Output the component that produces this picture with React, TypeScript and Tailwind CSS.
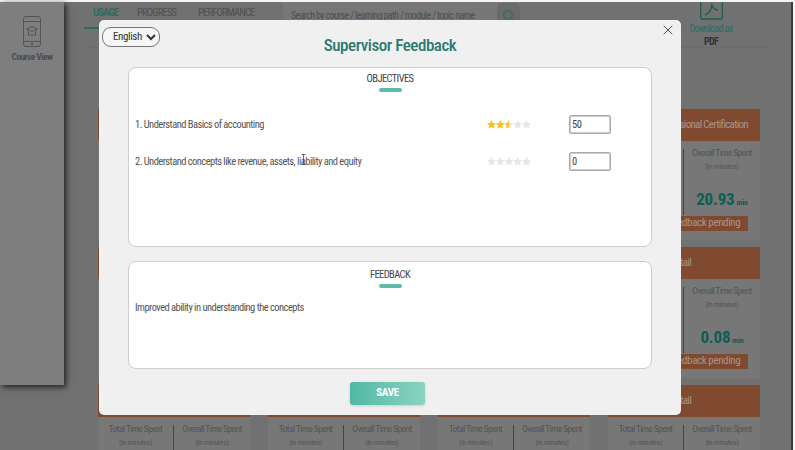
import { Search, X } from "lucide-react";

const font = "font-['Roboto',sans-serif] [font-stretch:75%]";

const cards = [
  { title: "Course Overview", value: "", pending: false, titleClass: "justify-center" },
  { title: "Course Overview", value: "", pending: false, titleClass: "justify-center" },
  { title: "Course Overview", value: "", pending: false, titleClass: "justify-center" },
  { title: "Professional Certification", value: "20.93", pending: true, titleClass: "justify-end pr-3" },
  { title: "Course Detail", value: "", pending: false, titleClass: "justify-center" },
  { title: "Course Detail", value: "", pending: false, titleClass: "justify-center" },
  { title: "Course Detail", value: "", pending: false, titleClass: "justify-center" },
  { title: "Retail", value: "0.08", pending: true, titleClass: "justify-end pr-[69px]" },
  { title: "Course Detail", value: "", pending: false, titleClass: "justify-center" },
  { title: "Course Detail", value: "", pending: false, titleClass: "justify-center" },
  { title: "Course Detail", value: "", pending: false, titleClass: "justify-center" },
  { title: "Retail", value: "", pending: false, titleClass: "justify-end pr-[69px]" },
];

const objectives = [
  { label: "1. Understand Basics of accounting", score: 50 },
  { label: "2. Understand concepts like revenue, assets, liability and equity", score: 0 },
];

function Stars({ className }: { className: string }) {
  return (
    <svg viewBox="0 0 44 9" width={44} height={9} className={`shrink-0 ${className}`}>
      {[0, 8.75, 17.5, 26.25, 35].map((x) => (
        <path
          key={x}
          transform={`translate(${x} 0)`}
          d="M4.5 0 5.9 2.9 9 3.3 6.7 5.4 7.3 8.6 4.5 7 1.7 8.6 2.3 5.4 0 3.3 3.1 2.9Z"
          fill="currentColor"
        />
      ))}
    </svg>
  );
}

function Rating({ score }: { score: number }) {
  return (
    <div className="relative h-[9px] w-11">
      <Stars className="text-[#e6e6e6]" />
      <div className="absolute left-0 top-0 h-[9px] overflow-hidden" style={{ width: `${score}%` }}>
        <Stars className="text-[#fcc419]" />
      </div>
    </div>
  );
}

function SectionTitle({ children }: { children: string }) {
  return (
    <div className="flex flex-col items-center">
      <div className="text-[10.5px] leading-[13px] tracking-[-0.6px] text-[#444]">{children}</div>
      <div className="mt-[3px] h-1 w-[23px] rounded-full bg-[#5cbcaa]" />
    </div>
  );
}

function TimeLabel({ children }: { children: string }) {
  return (
    <>
      <div className="whitespace-nowrap text-[9.5px] leading-[8px] tracking-[-0.6px]">{children}</div>
      <div className="mt-[6px] whitespace-nowrap text-[7.5px] leading-[8px] tracking-[-0.2px]">(in minutes)</div>
    </>
  );
}

function Card({ card }: { card: (typeof cards)[number] }) {
  return (
    <div className="flex h-[131px] flex-col bg-[#777]">
      <div className={`flex h-[32px] shrink-0 items-center bg-[#7f4a30] text-[11px] tracking-[-0.7px] text-[#ab9488] ${card.titleClass}`}>
        {card.title}
      </div>
      <div className="mt-2 grid h-[63px] shrink-0 grid-cols-2 text-center text-[#555]">
        <div className="border-r border-[#444]">
          <TimeLabel>Total Time Spent</TimeLabel>
        </div>
        <div>
          <TimeLabel>Overall Time Spent</TimeLabel>
          {card.value && (
            <div className="mt-[16px] whitespace-nowrap font-bold leading-[24px] text-[#0b5f52]">
              <span className="text-[17px] tracking-[-0.2px]">{card.value}</span>
              <span className="ml-[2px] text-[8px] tracking-[-0.2px]">min</span>
            </div>
          )}
        </div>
      </div>
      {card.pending && (
        <div className="mr-3 ml-auto mt-[4px] flex h-[15px] w-[88px] shrink-0 items-center justify-center whitespace-nowrap bg-[#7f4a30] text-[11px] tracking-[-0.4px] text-[#ab9488]">
          Feedback pending
        </div>
      )}
    </div>
  );
}

export default function App() {
  return (
    <div className={`relative flex h-[450px] w-[795px] flex-col overflow-hidden bg-[#f4f4f4] ${font}`}>
      <div className="mt-[2px] mr-[2px] flex min-h-0 flex-1 border-r-[2px] border-[#3a3a3a] bg-[#717171]">
        <aside className="flex h-[383px] w-16 shrink-0 flex-col items-center bg-[#7e7e7e] pt-[14px] shadow-[2px_2px_6px_rgba(0,0,0,0.75)]">
          <svg viewBox="0 0 18 31" width={18} height={31} fill="none" stroke="#555" strokeWidth="1">
            <rect x="0.5" y="0.5" width="17" height="30" rx="2.5" />
            <path d="M0.5 5.5h17M0.5 25.5h17" />
            <circle cx="9" cy="28" r="0.8" fill="#555" />
            <path d="M3.5 13 9 10.5 14.5 13 9 15.5Z" />
            <path d="M5.5 14.5v4.5h7v-4.5" />
          </svg>
          <div className="mt-[3px] text-[9.5px] font-bold tracking-[-0.6px] text-[#4e4e4e]">Course View</div>
        </aside>

        <main className="min-w-0 flex-1 pl-5">
          <header className="mr-[23px] flex h-[46px] border-b border-[#6c6c6c]">
            <nav className="flex h-[27px] text-[10.5px] leading-[22px] tracking-[-0.8px] text-[#505050]">
              <div className="w-[53px] border-b-2 border-[#2f6b5e] pl-[9px] font-bold text-[#2f6b5e]">USAGE</div>
              <div className="w-[61px]">PROGRESS</div>
              <div className="w-[85px]">PERFORMANCE</div>
            </nav>
            <div className="flex h-[26px] w-[237px] items-center justify-between bg-[#777] pl-2 text-[10px] tracking-[-0.62px] text-[#505050]">
              <span className="whitespace-nowrap">Search by course / learning path / module / topic name</span>
              <div className="flex h-[24px] w-[23px] shrink-0 items-center justify-center rounded bg-[#6a6a6a]">
                <Search size={13} className="text-[#2f6b5e]" />
              </div>
            </div>
            <div className="ml-[170px] flex w-[42px] flex-col items-center text-[10px] tracking-[-0.7px] text-[#2f6b5e]">
              <svg viewBox="0 2 23 18" width={23} height={18} fill="none" stroke="#1f5f54" strokeWidth="1.4" className="shrink-0">
                <path d="M0.7 0v17a2 2 0 0 0 2 2h17.6a2 2 0 0 0 2-2V0" />
                <path d="M5 15c3-1 6-5 7-10 1 3 3 5 6 5" />
              </svg>
              <div className="mt-[2px] whitespace-nowrap leading-[13px]">Download as</div>
              <div className="font-bold leading-[13px] text-[#333]">PDF</div>
            </div>
          </header>

          <div className="mt-[61px] ml-[14px] grid w-[662px] grid-cols-[repeat(4,152px)] gap-x-[18px] gap-y-[7px]">
            {cards.map((card, i) => (
              <Card key={i} card={card} />
            ))}
          </div>
        </main>
      </div>

      <div className="absolute left-[99px] top-5 flex h-[395px] w-[582px] flex-col rounded-[5px] bg-[#f1f0f0]">
        <div className="grid h-[47px] shrink-0 grid-cols-[1fr_auto_1fr]">
          <div className="pl-[3px] pt-[3px]">
            <select className="h-5 w-[58px] rounded-[9px] border border-[#777] bg-[#f6f6f6] pl-[6px] text-[11px] tracking-[-0.4px] text-[#333]">
              <option>English</option>
            </select>
          </div>
          <h1 className="pt-[14px] text-[17px] font-medium leading-[22px] tracking-[-0.45px] text-[#2d7a6e]">Supervisor Feedback</h1>
          <div className="flex justify-end pr-[5px] pt-[2px]">
            <X size={16} strokeWidth={1.4} className="text-[#444]" />
          </div>
        </div>

        <section className="relative mx-[29px] h-[180px] shrink-0 rounded-[8px] border border-[#cfcfcf] bg-white pt-[4px] text-[#555]">
          <SectionTitle>OBJECTIVES</SectionTitle>
          <div className="mt-[14px]">
            {objectives.map((item) => (
              <div key={item.label} className="flex h-[37px] items-center pl-[6px] text-[10.5px] tracking-[-0.54px]">
                <div className="w-[352px]">{item.label}</div>
                <Rating score={item.score} />
                <input
                  defaultValue={item.score}
                  className="ml-[38px] h-[19px] w-[42px] rounded-[2px] border border-[#aaa] px-[2px] text-[10.5px] text-[#444] shadow-[inset_0_0_0_1px_#ccc]"
                />
              </div>
            ))}
          </div>
          <svg viewBox="0 0 5 11" width={5} height={11} className="absolute left-[172px] top-[86px]" fill="none" stroke="#444" strokeWidth="0.8">
            <path d="M0.5 0.5h4M0.5 10.5h4M2.5 0.5v10" />
          </svg>
        </section>

        <section className="mx-[29px] mt-[14px] h-[108px] shrink-0 rounded-[8px] border border-[#cfcfcf] bg-white pt-[6px] text-[#555]">
          <SectionTitle>FEEDBACK</SectionTitle>
          <p className="mt-[13px] pl-[6px] text-[10.5px] leading-[14px] tracking-[-0.54px]">Improved ability in understanding the concepts</p>
        </section>

        <div className="mt-[13px] flex justify-center pr-[5px]">
          <button className="h-[23px] w-[75px] rounded-[3px] bg-gradient-to-r from-[#4fb8a4] to-[#8ad3c1] text-[11px] font-bold tracking-[-0.3px] text-white shadow-[0_1px_3px_rgba(0,0,0,0.15)]">
            SAVE
          </button>
        </div>
      </div>
    </div>
  );
}
